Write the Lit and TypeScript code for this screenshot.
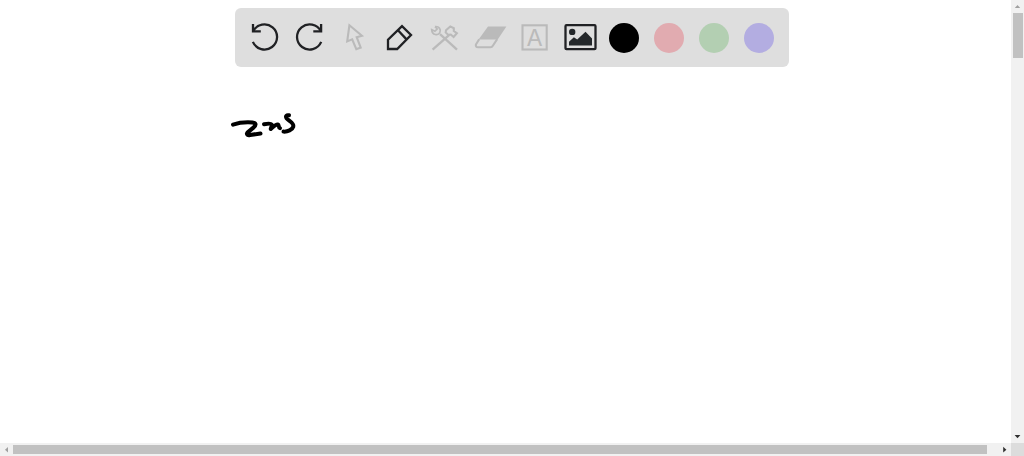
import { LitElement, html, svg, css } from "lit";
import { customElement } from "lit/decorators.js";

// Icons share one drawing space: the toolbar strip, cut into 45px cells.
const icons = [
  { name: "Undo", art: svg`<g class="ink"><path d="M253.2 31.3A12.6 12.6 0 1 1 252.9 41.9"/><path d="M253 24V31.4H260.8"/></g>` },
  { name: "Redo", art: svg`<g class="ink"><path d="M320.9 31.3A12.6 12.6 0 1 0 321.2 41.9"/><path d="M321.1 24V31.4H313.3"/></g>` },
  { name: "Select", art: svg`<path class="dim" d="M349.4 25.3L361.9 35.8L356.7 37.2L360.7 47.6L356.3 49.2L352.2 39.3L347.2 41.4Z"/>` },
  { name: "Pen", art: svg`<g class="ink"><path d="M388 49V39.7L402 26.2L411 35L397.2 49Z"/><path d="M398 30.3L406.5 39.4"/></g>` },
  { name: "Tools", art: svg`<g class="dim"><path d="M435 26.6C438.8 26 441.4 29.3 439.8 32.7C438.2 35.8 432 35.5 431.7 29.6L434.9 31.2L437.2 29L435 26.6" stroke-width="1.7"/><path d="M440 34.2L457 49.6" stroke-width="2.3"/><path d="M432.6 49.6L449.3 34.8" stroke-width="2.3"/><path d="M446 30.2L450.3 26.4L453.8 28.2V31L456.9 33.2L453.6 37L450.8 34.5L448.3 34.9L445.7 32.4Z"/></g>` },
  { name: "Eraser", art: svg`<path class="dim-fill" d="M488 26.4H506.4L497.7 39.6H478.6Z"/><path class="dim" stroke-width="1.5" d="M479.2 39.2L475.9 44.5Q475.5 47.3 478 47.3H490.4Q492 47.2 493 45.5L497.2 39.2"/>` },
  { name: "Text", art: svg`<rect class="dim" x="522.5" y="25.3" width="24.2" height="24.2"/><text class="letter" x="526.6" y="45.8" textLength="16.2" lengthAdjust="spacingAndGlyphs">A</text>` },
  { name: "Image", art: svg`<rect class="ink" x="565.5" y="25.2" width="30" height="24" rx="1"/><circle class="ink-fill" cx="572.2" cy="31.9" r="3.2"/><path class="ink-fill" d="M569 45.5V41.8L573.9 37.3L577.2 39.5L585.5 31.8L592 38.6V45.5Z"/>` },
];

const colours = ["black", "pink", "green", "violet"];

@customElement("app-root")
export class AppRoot extends LitElement {
  static styles = css`
    :host {
      display: grid;
      grid-template: minmax(0, 1fr) 13px / minmax(0, 1fr) 13px;
      width: 1024px;
      height: 456px;
      overflow: hidden;
      background: #fff;
      font-family: "Open Sans", sans-serif;
    }
    .board { display: flex; flex-direction: column; align-items: flex-start; padding: 8px 0 0 235px; }
    .toolbar {
      display: flex;
      box-sizing: border-box;
      width: 554px;
      height: 59px;
      padding: 0 7px;
      border-radius: 6px;
      background: #dedede;
    }
    .cell {
      display: flex;
      flex: none;
      align-items: center;
      justify-content: center;
      width: 45px;
      height: 59px;
      padding: 0;
      border: 0;
      background: none;
    }
    .icon { display: block; width: 45px; height: 59px; overflow: visible; }
    .ink { fill: none; stroke: #202124; stroke-width: 2.3; }
    .ink-fill { fill: #24282b; }
    .dim { fill: none; stroke: #bababa; stroke-width: 2.1; }
    .dim-fill { fill: #bababa; }
    .letter { fill: #bababa; font-family: Inter, sans-serif; font-size: 22.5px; }
    .swatch { width: 30px; height: 30px; margin-right: 1px; border-radius: 50%; }
    .black { background: #000; }
    .pink { background: #e1abb0; }
    .green { background: #b3cfb2; }
    .violet { background: #b3ade1; }
    .sketch { display: block; width: 90px; height: 50px; margin: 33px 0 0 -15px; }
    .stroke { fill: none; stroke: #000; stroke-width: 4; stroke-linecap: round; stroke-linejoin: round; }
    .track { display: flex; background: #f1f1f1; }
    .vertical { flex-direction: column; }
    .thumb { flex: none; background: #c1c1c1; }
    .vertical .thumb { width: 10px; height: 45px; margin-left: 1.5px; }
    .horizontal .thumb { width: 974px; height: 9px; margin-top: 2px; }
    .space { flex: 1; }
    .arrow { flex: none; display: block; width: 13px; height: 13px; }
    .off { fill: #a0a0a0; }
    .on { fill: #303030; }
    .corner { background: #dcdcdc; }
  `;

  render() {
    return html`
      <main class="board">
        <div class="toolbar">
          ${icons.map((icon, i) => html`
            <button class="cell" aria-label=${icon.name}>
              <svg class="icon" viewBox="${242 + i * 45} 8 45 59">${icon.art}</svg>
            </button>`)}
          ${colours.map((c) => html`<button class="cell" aria-label=${c}><span class="swatch ${c}"></span></button>`)}
        </div>
        <svg class="sketch" viewBox="220 100 90 50">
          <path class="stroke" d="M233 124.6C239 122.5 246 121.9 252.5 122.4C256.5 122.9 256.3 125.2 253.4 127.6L247.4 132.6C245.8 134.8 248.2 135.4 250 135L260.5 133.5"/>
          <path class="stroke" d="M264 124.2C267 123.6 270.6 122.9 271.6 124.4C272.2 125.8 270.9 127.6 270.7 129C272.8 127 275.8 124.2 277.8 124.4C279.4 124.8 278 127.6 280 128.2"/>
          <path class="stroke" d="M289 115.3C286.7 114.7 285.2 116.2 286.6 118.3C288.5 121 294.2 122.7 293.3 126.6C292.4 129.8 287.5 131.9 283.5 131.6"/>
        </svg>
      </main>
      <div class="track vertical">
        <svg class="arrow off" viewBox="0 0 13 13"><path d="M3.8 8L6.5 5L9.2 8Z"/></svg>
        <div class="thumb"></div>
        <div class="space"></div>
        <svg class="arrow on" viewBox="0 0 13 13"><path d="M3.6 5L9.4 5L6.5 8.2Z"/></svg>
      </div>
      <div class="track horizontal">
        <svg class="arrow off" viewBox="0 0 13 13"><path d="M8 4L5 6.7L8 9.4Z"/></svg>
        <div class="thumb"></div>
        <div class="space"></div>
        <svg class="arrow on" viewBox="0 0 13 13"><path d="M5.2 3.8L8.4 6.7L5.2 9.6Z"/></svg>
      </div>
      <div class="corner"></div>
    `;
  }
}
